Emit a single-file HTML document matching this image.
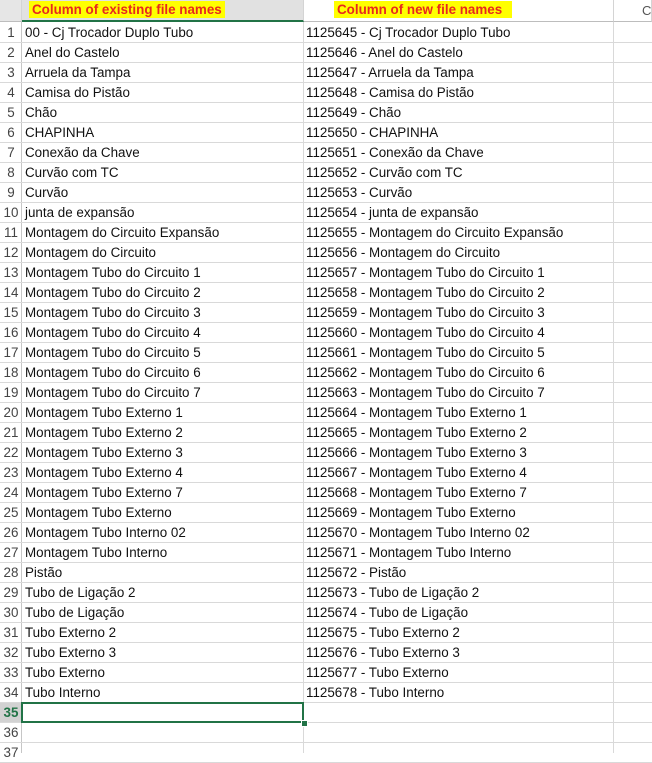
<!DOCTYPE html>
<html><head><style>
body{margin:0;width:652px;height:753px;overflow:hidden;background:#fff;font-family:"Liberation Sans",sans-serif;position:relative}
.h{position:absolute;top:0;height:22px;border-right:1px solid #d4d4d4;box-sizing:border-box;border-bottom:1px solid #bdbdbd}
.r{position:absolute;left:0;width:652px;height:20px;border-bottom:1px solid #d9d9d9;box-sizing:border-box;font-size:13.4px;color:#111}
.r span{position:absolute;top:2px;white-space:nowrap}
.n{left:0;width:22px;text-align:center;color:#444}
.a{left:25px}.b{left:306px}
.v{position:absolute;top:0;height:753px;width:1px;background:#d9d9d9}
.y{position:absolute;background:#ffff00;color:#e8281e;font-weight:bold;font-size:13.4px;height:17px;line-height:17px;top:1px;padding:0 3px}
</style></head><body>
<div class="v" style="left:21px;background:#c6c6c6"></div>
<div class="v" style="left:303px"></div>
<div class="v" style="left:613px"></div>
<div class="h" style="left:0;width:22px;background:#e6e6e6"></div>
<div class="h" style="left:22px;width:282px;background:#e1e1e1;border-bottom:2px solid #217346"></div>
<div class="h" style="left:304px;width:310px;background:#fff"></div>
<div class="h" style="left:614px;width:38px;background:#fff"><span style="position:absolute;left:28px;top:3px;font-size:13px;color:#555">C</span></div>
<div class="y" style="left:29px">Column of existing file names</div>
<div class="y" style="left:334px;width:172px">Column of new file names</div>
<div id="rows"></div>
<script>
const a=["00 - Cj Trocador Duplo Tubo","Anel do Castelo","Arruela da Tampa","Camisa do Pistão","Chão","CHAPINHA","Conexão da Chave","Curvão com TC","Curvão","junta de expansão","Montagem do Circuito Expansão","Montagem do Circuito","Montagem Tubo do Circuito 1","Montagem Tubo do Circuito 2","Montagem Tubo do Circuito 3","Montagem Tubo do Circuito 4","Montagem Tubo do Circuito 5","Montagem Tubo do Circuito 6","Montagem Tubo do Circuito 7","Montagem Tubo Externo 1","Montagem Tubo Externo 2","Montagem Tubo Externo 3","Montagem Tubo Externo 4","Montagem Tubo Externo 7","Montagem Tubo Externo","Montagem Tubo Interno 02","Montagem Tubo Interno","Pistão","Tubo de Ligação 2","Tubo de Ligação","Tubo Externo 2","Tubo Externo 3","Tubo Externo","Tubo Interno"];
let h="";
for(let i=0;i<37;i++){
 const t=23+20*i;
 const sel=i==34;
 h+=`<div class="r" style="top:${t}px"><span class="n" style="${sel?'background:#d2d2d2;color:#217346;font-weight:bold;top:0;height:19px;line-height:19px':''}">${i+1}</span>`;
 if(i<34){const bn=i==0?"Cj Trocador Duplo Tubo":a[i];h+=`<span class="a">${a[i]}</span><span class="b">${1125645+i} - ${bn}</span>`;}
 h+=`</div>`;
}
h+=`<div style="position:absolute;left:21px;top:702px;width:283px;height:21px;border:2px solid #217346;box-sizing:border-box"></div><div style="position:absolute;left:301px;top:720px;width:5px;height:5px;background:#217346;border:1px solid #fff"></div>`;
document.getElementById("rows").innerHTML=h;
</script>
</body></html>
